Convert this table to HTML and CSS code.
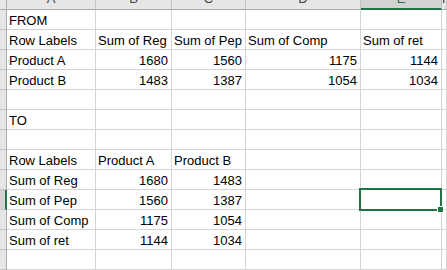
FILE: index.html
```html
<!DOCTYPE html>
<html>
<head>
<meta charset="utf-8">
<link rel="stylesheet" href="styles.css">
</head>
<body>
<div class="sheet">
  <div class="ch corner"></div>
  <div class="ch"><span>A</span></div>
  <div class="ch"><span>B</span></div>
  <div class="ch"><span>C</span></div>
  <div class="ch"><span>D</span></div>
  <div class="ch ch-sel"><span>E</span></div>
  <div class="ch"><span>F</span></div>

  <div class="rh"><span>1</span></div>
  <div class="c">FROM</div><div class="c"></div><div class="c"></div><div class="c"></div><div class="c"></div><div class="c"></div>

  <div class="rh"><span>2</span></div>
  <div class="c">Row Labels</div><div class="c">Sum of Reg</div><div class="c">Sum of Pep</div><div class="c">Sum of Comp</div><div class="c">Sum of ret</div><div class="c"></div>

  <div class="rh"><span>3</span></div>
  <div class="c">Product A</div><div class="c n">1680</div><div class="c n">1560</div><div class="c n">1175</div><div class="c n">1144</div><div class="c"></div>

  <div class="rh"><span>4</span></div>
  <div class="c">Product B</div><div class="c n">1483</div><div class="c n">1387</div><div class="c n">1054</div><div class="c n">1034</div><div class="c"></div>

  <div class="rh"><span>5</span></div>
  <div class="c"></div><div class="c"></div><div class="c"></div><div class="c"></div><div class="c"></div><div class="c"></div>

  <div class="rh"><span>6</span></div>
  <div class="c">TO</div><div class="c"></div><div class="c"></div><div class="c"></div><div class="c"></div><div class="c"></div>

  <div class="rh"><span>7</span></div>
  <div class="c"></div><div class="c"></div><div class="c"></div><div class="c"></div><div class="c"></div><div class="c"></div>

  <div class="rh"><span>8</span></div>
  <div class="c">Row Labels</div><div class="c">Product A</div><div class="c">Product B</div><div class="c"></div><div class="c"></div><div class="c"></div>

  <div class="rh"><span>9</span></div>
  <div class="c">Sum of Reg</div><div class="c n">1680</div><div class="c n">1483</div><div class="c"></div><div class="c"></div><div class="c"></div>

  <div class="rh rh-sel"><span>10</span></div>
  <div class="c">Sum of Pep</div><div class="c n">1560</div><div class="c n">1387</div><div class="c"></div><div class="c active"><div class="sel"><div class="handle"></div></div></div><div class="c"></div>

  <div class="rh"><span>11</span></div>
  <div class="c">Sum of Comp</div><div class="c n">1175</div><div class="c n">1054</div><div class="c"></div><div class="c"></div><div class="c"></div>

  <div class="rh"><span>12</span></div>
  <div class="c">Sum of ret</div><div class="c n">1144</div><div class="c n">1034</div><div class="c"></div><div class="c"></div><div class="c"></div>

  <div class="rh"><span>13</span></div>
  <div class="c"></div><div class="c"></div><div class="c"></div><div class="c"></div><div class="c"></div><div class="c"></div>
</div>
</body>
</html>
```

FILE: styles.css
```css
html, body {
  margin: 0;
  padding: 0;
  background: #ffffff;
  overflow: hidden;
}

.sheet {
  display: grid;
  grid-template-columns: 7px 89px 76px 74px 115px 81px 1fr;
  grid-template-rows: 10px;
  grid-auto-rows: 20px;
  width: 447px;
  font-family: "Liberation Sans", Arial, sans-serif;
  font-size: 13px;
  color: #000000;
}

.ch {
  box-sizing: border-box;
  background: #e6e6e6;
  border-right: 1px solid #c4c4c4;
  border-bottom: 1px solid #ababab;
  overflow: hidden;
  text-align: center;
  color: #444444;
}

.ch span {
  display: block;
  height: 20px;
  line-height: 20px;
  margin-top: -11px;
}

.corner {
  border-right-color: #ababab;
}

.ch-sel {
  background: #d2d2d2;
  border-bottom: 2px solid #217346;
  color: #217346;
}

.rh {
  box-sizing: border-box;
  background: #e6e6e6;
  border-right: 1px solid #ababab;
  border-bottom: 1px solid #c4c4c4;
  overflow: hidden;
  color: #444444;
  font-size: 12px;
}

.rh span {
  display: block;
  width: 26px;
  margin-left: -20px;
  text-align: center;
  line-height: 19px;
}

.rh-sel {
  background: #d2d2d2;
  border-right: 2px solid #217346;
  color: #217346;
}

.rh-sel span {
  margin-left: -21px;
}

.c {
  box-sizing: border-box;
  border-right: 1px solid #d4d4d4;
  border-bottom: 1px solid #d4d4d4;
  padding: 3px 2px 0 2px;
  line-height: 16px;
  white-space: nowrap;
  overflow: hidden;
}

.n {
  text-align: right;
  padding-right: 3px;
}

.active {
  position: relative;
  overflow: visible;
}

.sel {
  position: absolute;
  left: -2px;
  top: -2px;
  width: 83px;
  height: 23px;
  box-sizing: border-box;
  border: 2px solid #217346;
  z-index: 2;
}

.handle {
  position: absolute;
  left: 76px;
  top: 16px;
  width: 5px;
  height: 5px;
  background: #217346;
  border: 1px solid #ffffff;
}
```
